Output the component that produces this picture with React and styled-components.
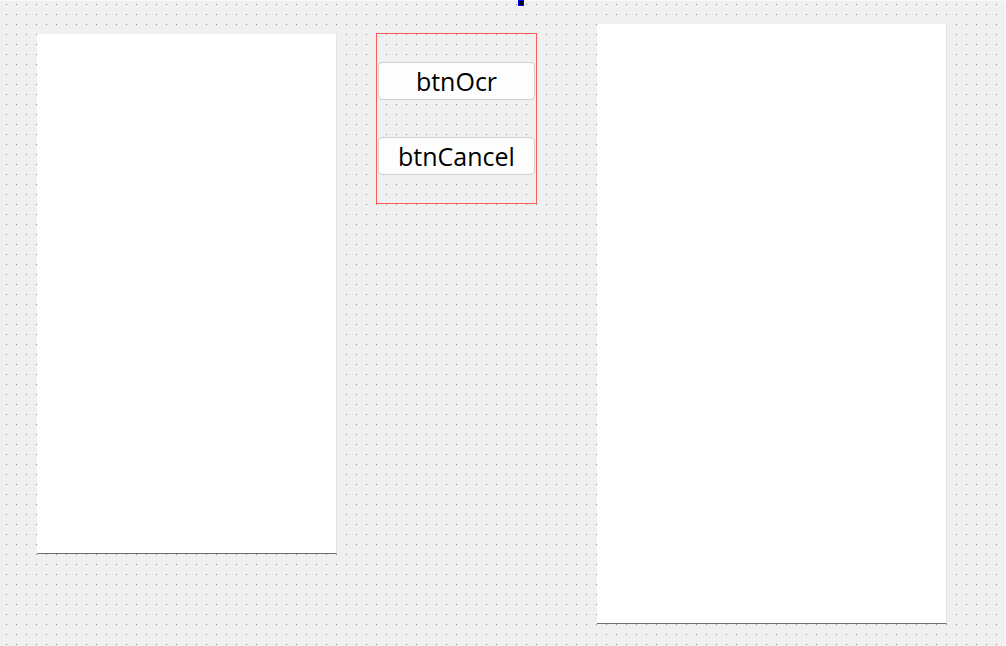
import React from "react";
import styled, { createGlobalStyle } from "styled-components";

const GlobalStyle = createGlobalStyle`
  html, body {
    margin: 0;
    padding: 0;
    background: #f0f0f0;
  }
  #root {
    width: 1006px;
    height: 646px;
    overflow: hidden;
  }
`;

const Form = styled.div`
  position: relative;
  width: 1006px;
  height: 646px;
  box-sizing: border-box;
  display: flex;
  align-items: flex-start;
  padding-left: 37px;
  background-color: #f0f0f0;
  background-image: linear-gradient(to bottom, transparent 1px, #f0f0f0 1px),
    linear-gradient(to right, #8c8c8c 1px, #f0f0f0 1px);
  background-size: 10px 10px;
  background-position: 6px 3px;
  border-top: 1px solid #f8f8f8;
  border-right: 1px solid #fafafa;
`;

const Panel = styled.div`
  flex: none;
  box-sizing: border-box;
  width: ${({ w }) => w}px;
  height: ${({ h }) => h}px;
  margin-top: ${({ top }) => top}px;
  margin-left: ${({ gap }) => gap || 0}px;
  background: #ffffff;
  border-right: 1px solid #e4e4e4;
  border-bottom: 1px solid #6f6f6f;
`;

const ButtonBox = styled.div`
  flex: none;
  box-sizing: border-box;
  width: 161px;
  height: 171px;
  margin-top: 32px;
  margin-left: 39px;
  border: 1px solid #ff5a5a;
  outline: 0;
  display: flex;
  flex-direction: column;
  gap: 37px;
  padding: 28px 1px 0;
`;

const Button = styled.button`
  box-sizing: border-box;
  height: 38px;
  width: 100%;
  margin: 0;
  padding: 0;
  background: #fdfdfd;
  border: 1px solid #d0d0d0;
  border-radius: 4px;
  color: #000;
  font-family: "Open Sans", "Noto Sans", sans-serif;
  font-size: 25px;
  line-height: 34px;
  text-align: center;
`;

const Handle = styled.div`
  position: absolute;
  left: 518px;
  top: -1px;
  width: 6px;
  height: 6px;
  box-sizing: border-box;
  background: #000;
  border: 1px solid #0000ff;
`;

export default function App() {
  return (
    <>
      <GlobalStyle />
      <Form>
        <Handle />
        <Panel w={300} h={520} top={33} />
        <ButtonBox>
          <Button>btnOcr</Button>
          <Button>btnCancel</Button>
        </ButtonBox>
        <Panel w={350} h={600} top={23} gap={60} />
      </Form>
    </>
  );
}
